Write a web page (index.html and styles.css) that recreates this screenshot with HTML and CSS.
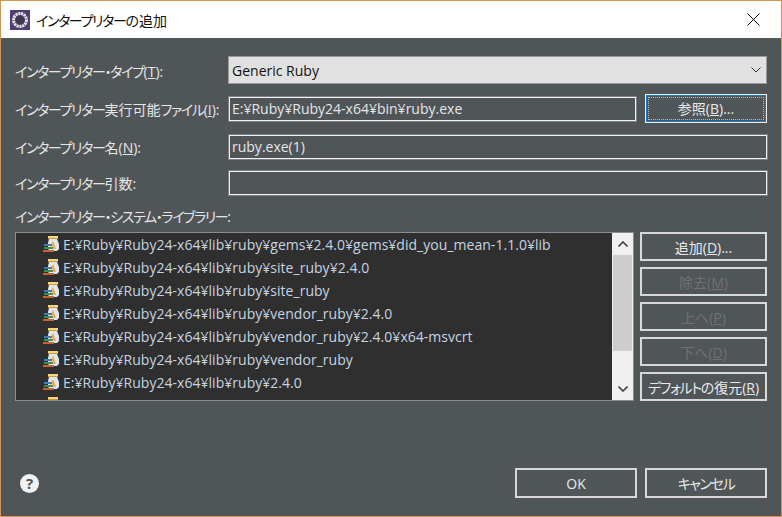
FILE: index.html
```html
<!DOCTYPE html>
<html lang="ja">
<head>
<meta charset="UTF-8">
<title>インタープリターの追加</title>
<link rel="stylesheet" href="styles.css">
</head>
<body>

<svg class="defs" width="0" height="0">
<symbol id="lib" viewBox="0 0 16 17">
<rect x="5" y="0" width="10" height="2" fill="#f6d77a"/>
<rect x="5" y="2" width="10" height="1" fill="#c99a3a"/>
<path d="M6 3h8l2 5v5l-2 2H6L5 12V7z" fill="#dfe6ee"/>
<path d="M10 5l3 8h-2l-2-4-2 4H6z" fill="#f2a33a"/>
<rect x="1" y="8" width="8" height="2" fill="#3f7fbf"/>
<rect x="1" y="11" width="9" height="2" fill="#3e8f5a"/>
<rect x="0" y="14" width="11" height="2" fill="#c8642c"/>
</symbol>
</svg>

<div class="window">

<div class="titlebar">
<svg class="appicon" width="20" height="20" viewBox="0 0 20 20">
<rect width="20" height="20" fill="#4f3d78"/>
<circle cx="10" cy="10" r="6.5" fill="none" stroke="#e4e2e0" stroke-width="3" stroke-dasharray="2.2 0.6"/>
<circle cx="10" cy="10" r="4" fill="#3a3a48"/>
</svg>
<span class="title"><span class="k">インタープリター</span>の追加</span>
<svg class="close" width="13" height="13" viewBox="0 0 13 13">
<path d="M0.5 0.5l12 12M12.5 0.5l-12 12" stroke="#000" stroke-width="1" fill="none"/>
</svg>
</div>

<div class="content">

<div class="form">
<label><span class="k">インタープリター・タイプ</span>(<u>T</u>):</label>
<div class="combo">
<span>Generic Ruby</span>
<svg width="10" height="6" viewBox="0 0 10 6"><path d="M0.5 0.5l4.5 4.5 4.5-4.5" stroke="#333" fill="none"/></svg>
</div>

<label><span class="k">インタープリター</span>実行可能<span class="k">ファイル</span>(<u>I</u>):</label>
<div class="field">E:¥Ruby¥Ruby24-x64¥bin¥ruby.exe</div>
<button class="btn focused"><span class="focus-ring">参照(<u>B</u>)...</span></button>

<label><span class="k">インタープリター</span>名(<u>N</u>):</label>
<div class="field wide">ruby.exe(1)</div>

<label><span class="k">インタープリター</span>引数:</label>
<div class="field wide"></div>
</div>

<div class="libs-label"><span class="k">インタープリター・システム・ライブラリー</span>:</div>

<div class="libs">
<div class="list">
<div class="rows">
<div class="item"><svg width="16" height="17"><use href="#lib"/></svg>E:¥Ruby¥Ruby24-x64¥lib¥ruby¥gems¥2.4.0¥gems¥did_you_mean-1.1.0¥lib</div>
<div class="item"><svg width="16" height="17"><use href="#lib"/></svg>E:¥Ruby¥Ruby24-x64¥lib¥ruby¥site_ruby¥2.4.0</div>
<div class="item"><svg width="16" height="17"><use href="#lib"/></svg>E:¥Ruby¥Ruby24-x64¥lib¥ruby¥site_ruby</div>
<div class="item"><svg width="16" height="17"><use href="#lib"/></svg>E:¥Ruby¥Ruby24-x64¥lib¥ruby¥vendor_ruby¥2.4.0</div>
<div class="item"><svg width="16" height="17"><use href="#lib"/></svg>E:¥Ruby¥Ruby24-x64¥lib¥ruby¥vendor_ruby¥2.4.0¥x64-msvcrt</div>
<div class="item"><svg width="16" height="17"><use href="#lib"/></svg>E:¥Ruby¥Ruby24-x64¥lib¥ruby¥vendor_ruby</div>
<div class="item"><svg width="16" height="17"><use href="#lib"/></svg>E:¥Ruby¥Ruby24-x64¥lib¥ruby¥2.4.0</div>
<div class="item"><svg width="16" height="17"><use href="#lib"/></svg></div>
</div>
<div class="scrollbar">
<svg class="arrow" width="10" height="6" viewBox="0 0 10 6"><path d="M0.5 5.5l4.5-4.5 4.5 4.5" stroke="#444" stroke-width="1.6" fill="none"/></svg>
<div class="track"><div class="thumb"></div></div>
<svg class="arrow" width="10" height="6" viewBox="0 0 10 6"><path d="M0.5 0.5l4.5 4.5 4.5-4.5" stroke="#444" stroke-width="1.6" fill="none"/></svg>
</div>
</div>
<div class="side">
<button class="btn">追加(<u>D</u>)...</button>
<button class="btn off">除去(<u>M</u>)</button>
<button class="btn off">上へ(<u>P</u>)</button>
<button class="btn off">下へ(<u>D</u>)</button>
<button class="btn"><span class="k">デフォルト</span>の復元(<u>R</u>)</button>
</div>
</div>

<div class="footer">
<div class="help">?</div>
<div class="actions">
<button class="btn">OK</button>
<button class="btn"><span class="k">キャンセル</span></button>
</div>
</div>

</div>
</div>

</body>
</html>
```

FILE: styles.css
```css
html,body{
    margin:0;
    padding:0;
}
body{
    width:782px;
    height:517px;
    overflow:hidden;
    font-family:"Open Sans","Noto Sans CJK JP",sans-serif;
    font-size:14px;
    font-feature-settings:"palt";
    color:#e4e6e8;
}
.defs{position:absolute;}

/* kana runs are narrower in the original UI font */
.k{letter-spacing:-1.35px;}

.window{
    box-sizing:border-box;
    width:782px;
    height:517px;
    border:1px solid #d9914e;
    background:#505558;
    display:flex;
    flex-direction:column;
}

.titlebar{
    height:37px;
    flex:none;
    background:#fff;
    color:#111;
    display:flex;
    align-items:center;
    padding:0 21px 0 9px;
}
.title{margin-left:6px;flex:1;}

.content{
    flex:1;
    display:flex;
    flex-direction:column;
    padding:18px 14px 18px 14px;
}

.form{
    display:grid;
    grid-template-columns:213px 408px 131px;
    grid-template-rows:26px 29px 24px 24px;
    row-gap:12px;
    align-items:center;
}
.form label{white-space:nowrap;}
.form label:first-child{padding-top:4px;}
.form .combo{grid-column:2 / 4;align-self:start;}
.form .wide{grid-column:2 / 4;}

.combo{
    height:28px;
    box-sizing:border-box;
    background:#e1e1e1;
    border:1px solid #9a9a9a;
    color:#111;
    display:flex;
    align-items:center;
    justify-content:space-between;
    padding:0 5px 0 3px;
}

.field{
    box-sizing:border-box;
    height:24px;
    margin-left:1px;
    border:1px solid #f2f2f2;
    outline:1px solid #7c8083;
    padding:0 2px;
    line-height:22px;
    color:#e4e6e8;
    white-space:nowrap;
    overflow:hidden;
}

.btn{
    box-sizing:border-box;
    font:inherit;
    font-feature-settings:"palt";
    color:#e8eaec;
    background:#505558;
    border:2px solid #d8d8d8;
    padding:0;
    height:29px;
    white-space:nowrap;
    cursor:default;
}
.btn.off{color:#6e7275;}

.form .btn{margin-left:9px;width:122px;}
.focused{
    border:2px solid #1a7ad0;
    outline:1px solid #eee;
    outline-offset:-1px;
    padding:1px;
}
.focus-ring{
    display:block;
    line-height:21px;
    border:1px dotted #bbb;
}

.libs-label{
    margin-top:14px;
    line-height:16px;
    height:16px;
}

.libs{
    display:flex;
    gap:6px;
    margin-top:7px;
}

.list{
    width:619px;
    height:169px;
    box-sizing:border-box;
    border:1px solid #8a8d90;
    background:#2f2f2f;
    display:flex;
    overflow:hidden;
}
.rows{
    flex:1;
    overflow:hidden;
}
.item{
    height:23px;
    display:flex;
    align-items:center;
    padding-left:27px;
    white-space:nowrap;
    letter-spacing:0.03px;
    color:#c6d4e2;
}
.item svg{margin-right:4px;flex:none;}

.scrollbar{
    width:21px;
    flex:none;
    background:#f0f0f0;
    display:flex;
    flex-direction:column;
    align-items:center;
}
.arrow{flex:none;margin:8px 0;}
.track{flex:1;width:100%;padding:0 1px;box-sizing:border-box;}
.thumb{height:96px;background:#cdcdcd;}

.side{
    width:127px;
    display:flex;
    flex-direction:column;
    gap:6px;
}

.footer{
    margin-top:auto;
    display:flex;
    align-items:center;
    justify-content:space-between;
}
.help{
    width:19px;
    height:19px;
    margin-left:5px;
    border-radius:50%;
    background:#f0f2f4;
    color:#4a5058;
    font-weight:bold;
    font-size:15px;
    line-height:19px;
    text-align:center;
}
.actions{display:flex;gap:8px;}
.actions .btn{width:122px;height:30px;}
```
